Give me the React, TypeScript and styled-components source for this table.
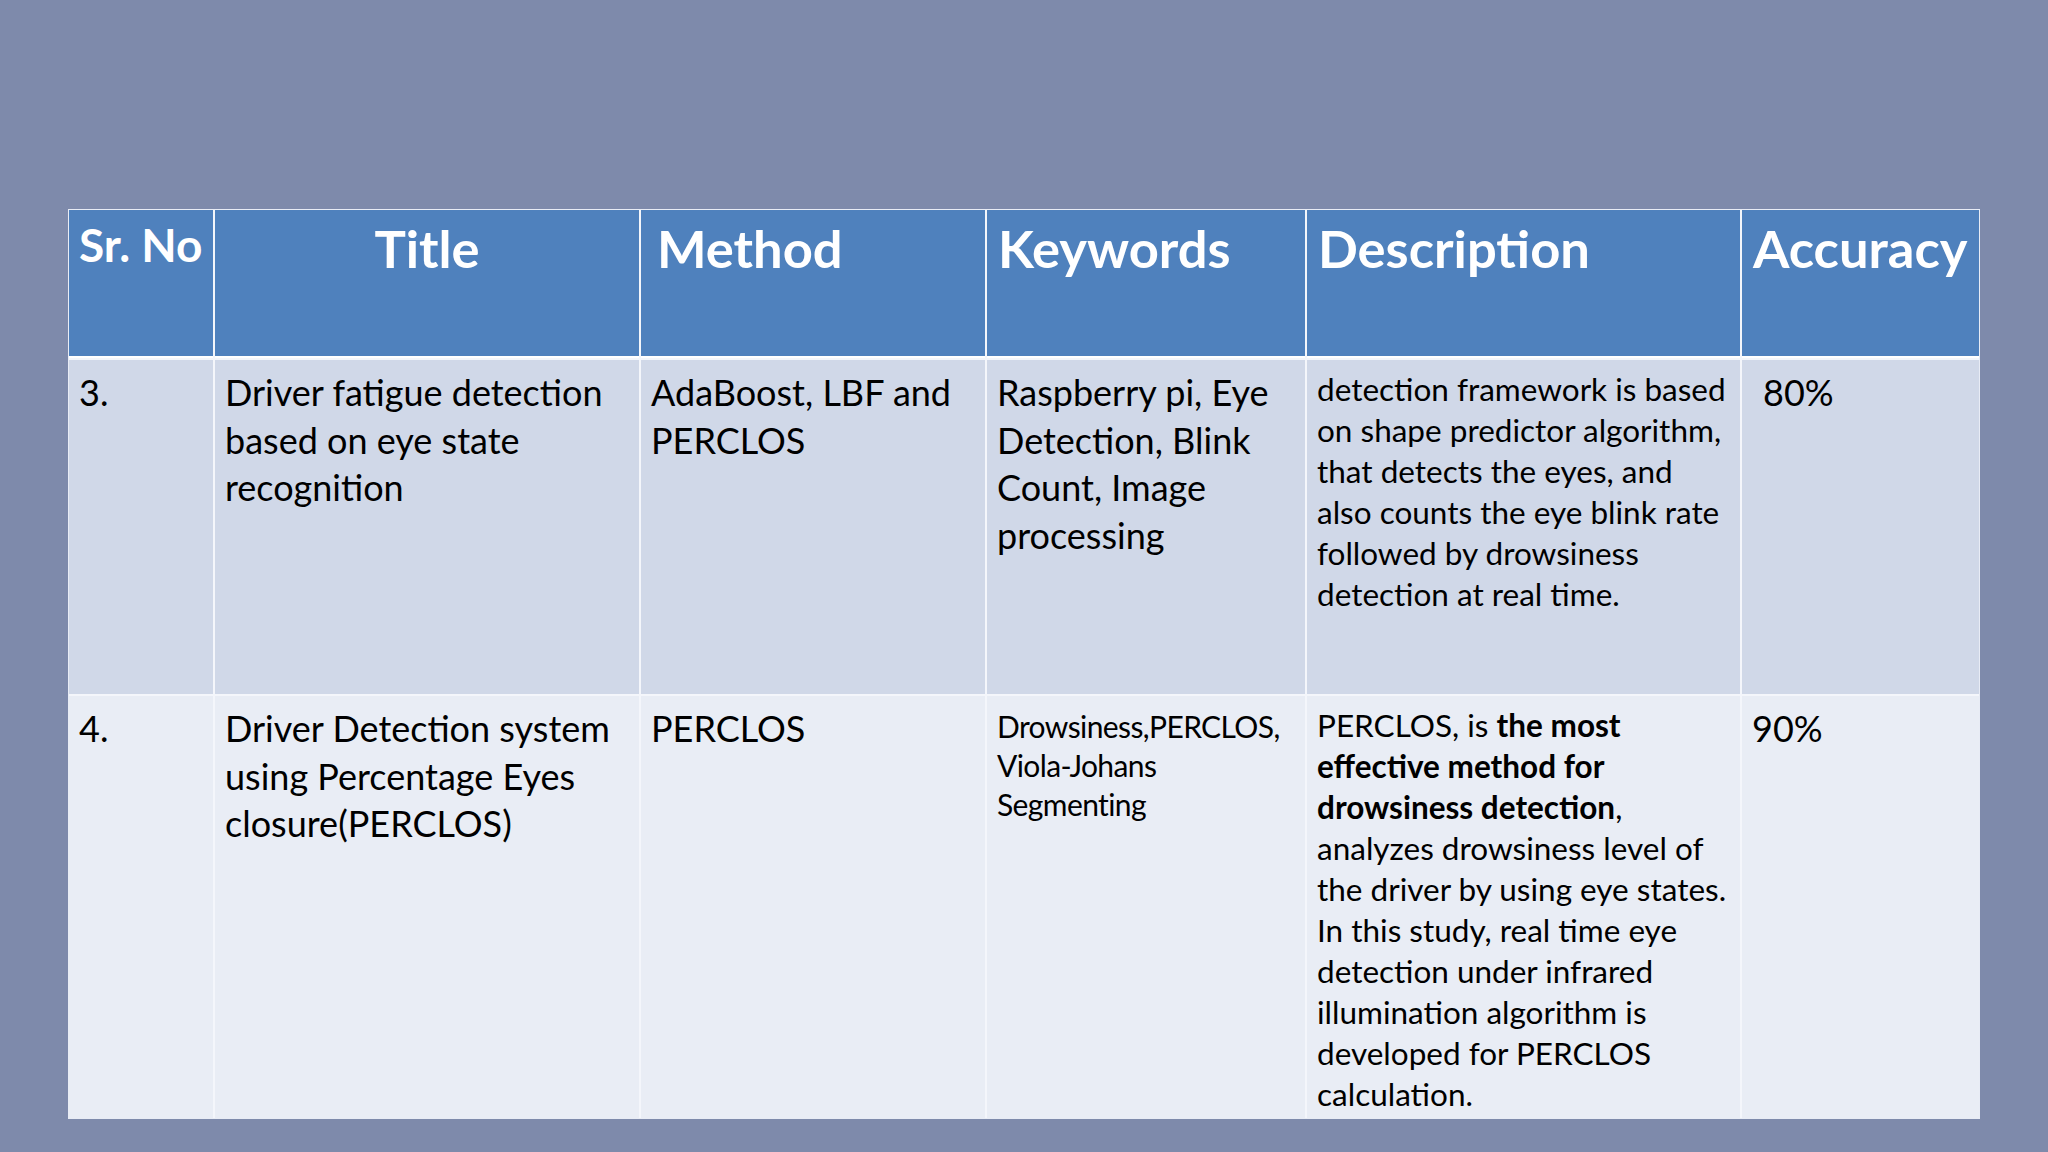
import React from 'react'
import styled, { createGlobalStyle } from 'styled-components'

type Line = React.ReactNode

interface RowData {
	no: string
	title: Line[]
	method: Line[]
	keywords: Line[]
	smallKeywords?: boolean
	description: Line[]
	accuracy: string
	accuracyIndent?: boolean
}

const rows: RowData[] = [
	{
		no: '3.',
		title: ['Driver fatigue detection', 'based on eye state', 'recognition'],
		method: ['AdaBoost, LBF and', 'PERCLOS'],
		keywords: ['Raspberry pi, Eye', 'Detection, Blink', 'Count, Image', 'processing'],
		description: [
			'detection framework is based',
			'on shape predictor algorithm,',
			'that detects the eyes, and',
			'also counts the eye blink rate',
			'followed by drowsiness',
			'detection at real time.',
		],
		accuracy: '80%',
		accuracyIndent: true,
	},
	{
		no: '4.',
		title: ['Driver Detection system', 'using Percentage Eyes', 'closure(PERCLOS)'],
		method: ['PERCLOS'],
		keywords: ['Drowsiness,PERCLOS,', 'Viola-Johans', 'Segmenting'],
		smallKeywords: true,
		description: [
			<>PERCLOS, is <b>the most</b></>,
			<b>effective method for</b>,
			<><b>drowsiness detection</b>,</>,
			'analyzes drowsiness level of',
			'the driver by using eye states.',
			'In this study, real time eye',
			'detection under infrared',
			'illumination algorithm is',
			'developed for PERCLOS',
			'calculation.',
		],
		accuracy: '90%',
	},
]

const Lines = ({ lines }: { lines: Line[] }) => (
	<>
		{lines.map((l, i) => (
			<TextLine key={i}>{l}</TextLine>
		))}
	</>
)

const App = () => {
	return (
		<Slide>
			<GlobalStyle />
			<Table>
				<HeadCell $small $inset={10}>Sr. No</HeadCell>
				<HeadCell $center $inset={0}>Title</HeadCell>
				<HeadCell $inset={16}>Method</HeadCell>
				<HeadCell>Keywords</HeadCell>
				<HeadCell>Description</HeadCell>
				<HeadCell>Accuracy</HeadCell>

				{rows.map((r, idx) => {
					const alt = idx % 2 === 1
					return (
						<React.Fragment key={r.no}>
							<Cell $alt={alt}>{r.no}</Cell>
							<Cell $alt={alt}>
								<Lines lines={r.title} />
							</Cell>
							<Cell $alt={alt}>
								<Lines lines={r.method} />
							</Cell>
							<Cell $alt={alt} $size={r.smallKeywords ? 'keywords' : 'body'}>
								<Lines lines={r.keywords} />
							</Cell>
							<Cell $alt={alt} $size="desc">
								<Lines lines={r.description} />
							</Cell>
							<Cell $alt={alt} $indent={r.accuracyIndent}>
								{r.accuracy}
							</Cell>
						</React.Fragment>
					)
				})}
			</Table>
		</Slide>
	)
}

export default App

const GlobalStyle = createGlobalStyle`
	html, body {
		margin: 0;
		padding: 0;
		background: #7e8aab;
	}
`

const Slide = styled.div`
	width: 2048px;
	height: 1152px;
	box-sizing: border-box;
	padding: 209px 0 0 68px;
	background: #7e8aab;
	font-family: Lato, 'Open Sans', sans-serif;
	overflow: hidden;
`

const Table = styled.div`
	display: grid;
	grid-template-columns: 144px 424px 344px 318px 433px 237px;
	grid-template-rows: 148px 334px 422px;
	gap: 2px;
	width: 1912px;
	box-sizing: border-box;
	border: 1px solid #e8ecf5;
	background: #f4f6fb;
`

const HeadCell = styled.div<{ $small?: boolean; $center?: boolean; $inset?: number }>`
	background: #4f81bd;
	color: #fff;
	font-weight: 700;
	font-size: ${(p) => (p.$small ? '46px' : '52.5px')};
	line-height: ${(p) => (p.$small ? '54px' : '64px')};
	text-align: ${(p) => (p.$center ? 'center' : 'left')};
	padding: ${(p) => (p.$small ? '8px' : '6px')} 0 0 ${(p) => p.$inset ?? 11}px;
	border-bottom: 2px solid #fff;
	white-space: nowrap;
`

type CellSize = 'body' | 'keywords' | 'desc'

const sizes: Record<CellSize, { font: string; line: string; top: string }> = {
	body: { font: '36px', line: '47.7px', top: '9px' },
	keywords: { font: '30px', line: '39px', top: '10.5px' },
	desc: { font: '31.5px', line: '41px', top: '8.5px' },
}

const Cell = styled.div<{ $alt?: boolean; $size?: CellSize; $indent?: boolean }>`
	background: ${(p) => (p.$alt ? '#e9edf5' : '#d0d8e8')};
	color: #000;
	font-size: ${(p) => sizes[p.$size ?? 'body'].font};
	line-height: ${(p) => sizes[p.$size ?? 'body'].line};
	letter-spacing: ${(p) => (p.$size === 'keywords' ? '-0.02em' : '0')};
	padding: ${(p) => sizes[p.$size ?? 'body'].top} 10px 0 ${(p) => (p.$indent ? '21px' : '10px')};
	white-space: nowrap;
`

const TextLine = styled.span`
	display: block;

	b {
		font-weight: 700;
	}
`
